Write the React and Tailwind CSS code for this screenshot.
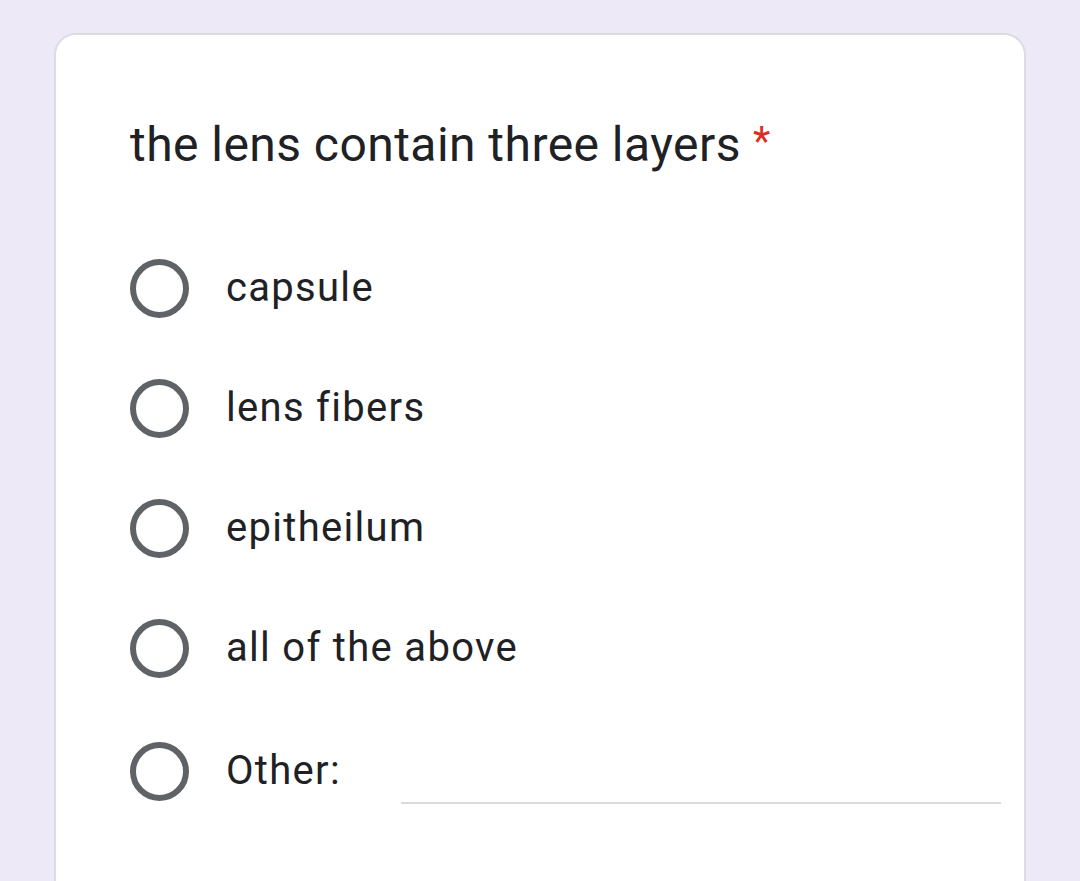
const options = ["capsule", "lens fibers", "epitheilum", "all of the above"];

function Radio() {
  return <div className="w-[59px] h-[59px] shrink-0 rounded-full border-[6px] border-[#5f6368]" />;
}

export default function App() {
  return (
    <div className="min-h-[881px] h-[881px] overflow-hidden bg-[#ede9f7] pt-[33px] pl-[54px]" style={{ fontFamily: "Roboto, 'Liberation Sans', sans-serif" }}>
      <div className="w-[972px] h-[900px] bg-white border-2 border-[#dadce0] rounded-[22px] pl-[74px] pr-[23px] pt-[82px]">
        <div className="text-[48px] leading-[56px] text-[#202124] tracking-[0.45px]">
          the lens contain three layers
          <span className="relative top-[-6px] text-[40px] text-[#d93025] ml-[12px]">*</span>
        </div>

        <div className="mt-[52px]">
          {options.map((opt) => (
            <div key={opt} className="flex items-center h-[120px]">
              <Radio />
              <span className="ml-[37px] text-[40px] tracking-[1.3px] text-[#202124]">{opt}</span>
            </div>
          ))}
          <div className="flex items-center h-[126px]">
            <Radio />
            <span className="ml-[37px] text-[40px] tracking-[1.3px] text-[#202124]">Other:</span>
            <div className="ml-auto w-[600px] h-[65px] border-b-2 border-[#d9d9de]" />
          </div>
        </div>
      </div>
    </div>
  );
}
